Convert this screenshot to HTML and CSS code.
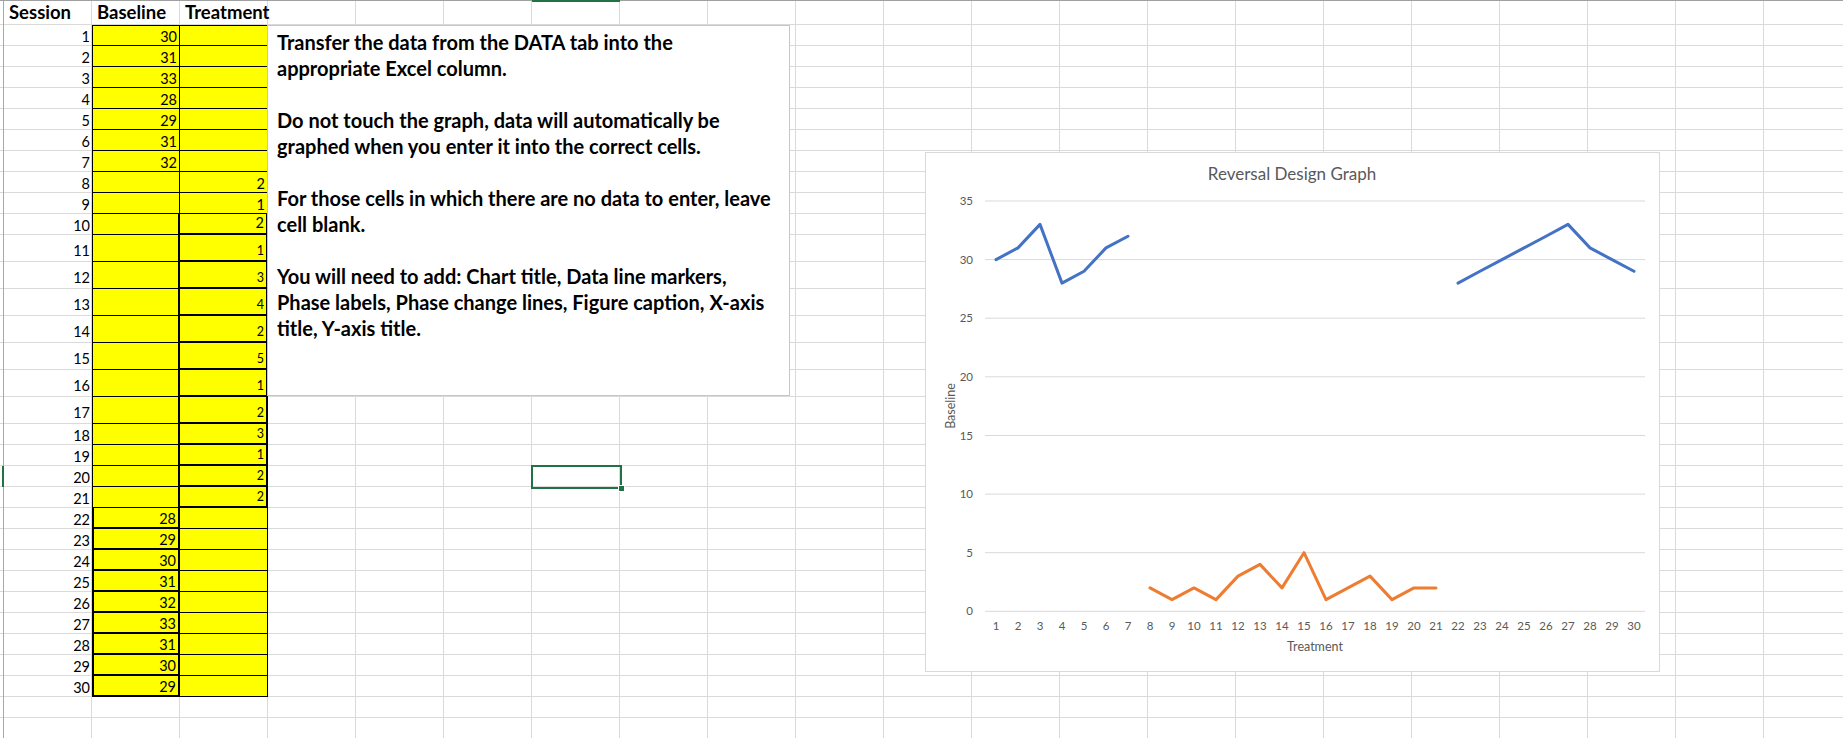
FILE: index.html
```html
<!DOCTYPE html>
<html lang="en">
<head>
<meta charset="utf-8">
<title>Reversal Design</title>
<link rel="stylesheet" href="styles.css">
</head>
<body>
<div class="page">
  <div class="sheet">
    <div class="row hdr"><div class="rh"></div><div class="c h">Session</div><div class="c h">Baseline</div><div class="c h">Treatment</div></div>
    <div class="row r21"><div class="rh"></div><div class="c a">1</div><div class="c y b top">30</div><div class="c y t top"></div></div>
    <div class="row r21"><div class="rh"></div><div class="c a">2</div><div class="c y b">31</div><div class="c y t"></div></div>
    <div class="row r21"><div class="rh"></div><div class="c a">3</div><div class="c y b">33</div><div class="c y t"></div></div>
    <div class="row r21"><div class="rh"></div><div class="c a">4</div><div class="c y b">28</div><div class="c y t"></div></div>
    <div class="row r21"><div class="rh"></div><div class="c a">5</div><div class="c y b">29</div><div class="c y t"></div></div>
    <div class="row r21"><div class="rh"></div><div class="c a">6</div><div class="c y b">31</div><div class="c y t"></div></div>
    <div class="row r21"><div class="rh"></div><div class="c a">7</div><div class="c y b">32</div><div class="c y t"></div></div>
    <div class="row r21"><div class="rh"></div><div class="c a">8</div><div class="c y b"></div><div class="c y t">2</div></div>
    <div class="row r21"><div class="rh"></div><div class="c a">9</div><div class="c y b"></div><div class="c y t">1</div></div>
    <div class="row r21"><div class="rh"></div><div class="c a">10</div><div class="c y b bk"></div><div class="c y t tk">2</div></div>
    <div class="row r27"><div class="rh"></div><div class="c a lo">11</div><div class="c y b bk"></div><div class="c y t tk sm">1</div></div>
    <div class="row r27"><div class="rh"></div><div class="c a lo">12</div><div class="c y b bk"></div><div class="c y t tk sm">3</div></div>
    <div class="row r27"><div class="rh"></div><div class="c a lo">13</div><div class="c y b bk"></div><div class="c y t tk sm">4</div></div>
    <div class="row r27"><div class="rh"></div><div class="c a lo">14</div><div class="c y b bk"></div><div class="c y t tk sm">2</div></div>
    <div class="row r27"><div class="rh"></div><div class="c a lo">15</div><div class="c y b bk"></div><div class="c y t tk sm">5</div></div>
    <div class="row r27"><div class="rh"></div><div class="c a lo">16</div><div class="c y b bk"></div><div class="c y t tk sm">1</div></div>
    <div class="row r27"><div class="rh"></div><div class="c a lo">17</div><div class="c y b bk"></div><div class="c y t tk sm">2</div></div>
    <div class="row r21"><div class="rh"></div><div class="c a">18</div><div class="c y b bk"></div><div class="c y t tk sm">3</div></div>
    <div class="row r21"><div class="rh"></div><div class="c a">19</div><div class="c y b bk"></div><div class="c y t tk sm">1</div></div>
    <div class="row r21"><div class="rh sel"></div><div class="c a">20</div><div class="c y b bk"></div><div class="c y t tk sm">2</div></div>
    <div class="row r21"><div class="rh"></div><div class="c a">21</div><div class="c y b bk"></div><div class="c y t tk sm">2</div></div>
    <div class="row r21"><div class="rh"></div><div class="c a">22</div><div class="c y b bk bb">28</div><div class="c y t"></div></div>
    <div class="row r21"><div class="rh"></div><div class="c a">23</div><div class="c y b bk bb">29</div><div class="c y t"></div></div>
    <div class="row r21"><div class="rh"></div><div class="c a">24</div><div class="c y b bk bb">30</div><div class="c y t"></div></div>
    <div class="row r21"><div class="rh"></div><div class="c a">25</div><div class="c y b bk bb">31</div><div class="c y t"></div></div>
    <div class="row r21"><div class="rh"></div><div class="c a">26</div><div class="c y b bk bb">32</div><div class="c y t"></div></div>
    <div class="row r21"><div class="rh"></div><div class="c a">27</div><div class="c y b bk bb">33</div><div class="c y t"></div></div>
    <div class="row r21"><div class="rh"></div><div class="c a">28</div><div class="c y b bk bb">31</div><div class="c y t"></div></div>
    <div class="row r21"><div class="rh"></div><div class="c a">29</div><div class="c y b bk bb">30</div><div class="c y t"></div></div>
    <div class="row r21"><div class="rh"></div><div class="c a">30</div><div class="c y b bk bb">29</div><div class="c y t"></div></div>
    <div class="row r21"><div class="rh"></div></div>
    <div class="row r21"><div class="rh"></div></div>
  </div>

  <div class="colsel"></div>
  <div class="selcell"><span class="handle"></span></div>

  <div class="note">
    <p>Transfer the data from the DATA tab into the<br>appropriate Excel column.</p>
    <p>Do not touch the graph, data will automatically be<br>graphed when you enter it into the correct cells.</p>
    <p>For those cells in which there are no data to enter, leave<br>cell blank.</p>
    <p>You will need to add: Chart title, Data line markers,<br>Phase labels, Phase change lines, Figure caption, X-axis<br>title, Y-axis title.</p>
  </div>

  <div class="chart">
    <svg class="chart-svg" width="733" height="518" viewBox="1 1 733 518" xmlns="http://www.w3.org/2000/svg">
      <text class="ttl" x="367" y="28" text-anchor="middle">Reversal Design Graph</text>
      <g class="grid">
        <line x1="60" y1="49" x2="720" y2="49"/>
        <line x1="60" y1="107.6" x2="720" y2="107.6"/>
        <line x1="60" y1="166.2" x2="720" y2="166.2"/>
        <line x1="60" y1="224.8" x2="720" y2="224.8"/>
        <line x1="60" y1="283.5" x2="720" y2="283.5"/>
        <line x1="60" y1="342.1" x2="720" y2="342.1"/>
        <line x1="60" y1="400.7" x2="720" y2="400.7"/>
        <line x1="60" y1="459.3" x2="720" y2="459.3"/>
      </g>
      <g class="ylab" text-anchor="end">
        <text x="48" y="53">35</text>
        <text x="48" y="111.6">30</text>
        <text x="48" y="170.2">25</text>
        <text x="48" y="228.8">20</text>
        <text x="48" y="287.5">15</text>
        <text x="48" y="346.1">10</text>
        <text x="48" y="404.7">5</text>
        <text x="48" y="463.3">0</text>
      </g>
      <g class="xlab" text-anchor="middle">
        <text x="71" y="478">1</text><text x="93" y="478">2</text><text x="115" y="478">3</text><text x="137" y="478">4</text><text x="159" y="478">5</text>
        <text x="181" y="478">6</text><text x="203" y="478">7</text><text x="225" y="478">8</text><text x="247" y="478">9</text><text x="269" y="478">10</text>
        <text x="291" y="478">11</text><text x="313" y="478">12</text><text x="335" y="478">13</text><text x="357" y="478">14</text><text x="379" y="478">15</text>
        <text x="401" y="478">16</text><text x="423" y="478">17</text><text x="445" y="478">18</text><text x="467" y="478">19</text><text x="489" y="478">20</text>
        <text x="511" y="478">21</text><text x="533" y="478">22</text><text x="555" y="478">23</text><text x="577" y="478">24</text><text x="599" y="478">25</text>
        <text x="621" y="478">26</text><text x="643" y="478">27</text><text x="665" y="478">28</text><text x="687" y="478">29</text><text x="709" y="478">30</text>
      </g>
      <text class="axt" x="390" y="499" text-anchor="middle">Treatment</text>
      <text class="axt" x="0" y="0" text-anchor="middle" transform="translate(30 254) rotate(-90)">Baseline</text>
      <polyline class="s1" points="71,107.6 93,95.9 115,72.4 137,131.1 159,119.3 181,95.9 203,84.2"/>
      <polyline class="s1" points="533,131.1 555,119.3 577,107.6 599,95.9 621,84.2 643,72.4 665,95.9 687,107.6 709,119.3"/>
      <polyline class="s2" points="225,435.9 247,447.6 269,435.9 291,447.6 313,424.1 335,412.4 357,435.9 379,400.7 401,447.6 423,435.9 445,424.1 467,447.6 489,435.9 511,435.9"/>
    </svg>
  </div>
</div>
</body>
</html>
```
FILE: styles.css
```css
* { box-sizing: border-box; }

html, body {
  margin: 0;
  padding: 0;
  background: #fff;
  overflow: hidden;
}

body {
  width: 1843px;
  height: 738px;
  font-family: Lato, "Open Sans", "Liberation Sans", sans-serif;
  color: #000;
}

.page {
  position: relative;
  width: 1843px;
  height: 738px;
  overflow: hidden;
}

.sheet {
  width: 1843px;
  height: 738px;
  border-top: 1px solid #a0a0a0;
  background-image: repeating-linear-gradient(to right, transparent 0 87px, #dadada 87px 88px);
  background-position: 4px 0;
}

.row {
  display: flex;
  background-image: linear-gradient(to top, #dadada 0 1px, transparent 1px);
}

.hdr { height: 24px; }
.r21 { height: 21px; }
.r27 { height: 27px; }

.rh {
  width: 4px;
  flex: none;
  border-right: 1px solid #a8a8a8;
}

.rh.sel {
  border-right: 2px solid #217346;
}

.c {
  width: 88px;
  flex: none;
  display: flex;
  align-items: flex-end;
  justify-content: flex-end;
  padding: 0 2px 2px 0;
  font-size: 14.5px;
  line-height: 1;
}

.c.h {
  justify-content: flex-start;
  font-weight: 700;
  font-size: 18.5px;
  padding: 0 0 4px 5px;
  white-space: nowrap;
}

.c.lo { padding-bottom: 4px; }

.y {
  background: #ffff00;
  border-right: 1px solid #000;
  border-bottom: 1px solid #000;
  padding-bottom: 1px;
}

.b { border-left: 1px solid #000; }
.top { border-top: 1px solid #000; }

.bk { border-right-width: 2px; }
.bb { border-bottom-width: 2px; border-left-width: 2px; }
.tk { border-bottom-width: 2px; border-right-width: 2px; padding-bottom: 3px; }
.sm { font-size: 12.5px; }

.colsel {
  position: absolute;
  left: 532px;
  top: 0;
  width: 88px;
  height: 2px;
  background: #217346;
}

.selcell {
  position: absolute;
  left: 531px;
  top: 465px;
  width: 91px;
  height: 24px;
  border: 2px solid #217346;
}

.handle {
  position: absolute;
  right: -5px;
  bottom: -5px;
  width: 7px;
  height: 7px;
  background: #217346;
  border: 1px solid #fff;
}

.note {
  position: absolute;
  left: 267px;
  top: 25px;
  width: 523px;
  height: 371px;
  background: #fff;
  border: 1px solid #c6c6c6;
  padding: 3px 0 0 9px;
  font-weight: 700;
  font-size: 20px;
  line-height: 26px;
  white-space: nowrap;
}

.note p {
  margin: 0 0 26px 0;
}

.chart {
  position: absolute;
  left: 925px;
  top: 152px;
  width: 735px;
  height: 520px;
  background: #fff;
  border: 1px solid #d9d9d9;
}

.chart-svg {
  display: block;
  font-family: Lato, "Open Sans", sans-serif;
}

.chart-svg .ttl { font-size: 17px; fill: #595959; }
.chart-svg .grid line { stroke: #d9d9d9; stroke-width: 1; }
.chart-svg .ylab text, .chart-svg .xlab text { font-size: 11.5px; fill: #595959; }
.chart-svg .axt { font-size: 12.5px; fill: #595959; }
.chart-svg .s1, .chart-svg .s2 {
  fill: none;
  stroke-width: 3;
  stroke-linejoin: round;
  stroke-linecap: round;
}
.chart-svg .s1 { stroke: #4472c4; }
.chart-svg .s2 { stroke: #ed7d31; }
```
